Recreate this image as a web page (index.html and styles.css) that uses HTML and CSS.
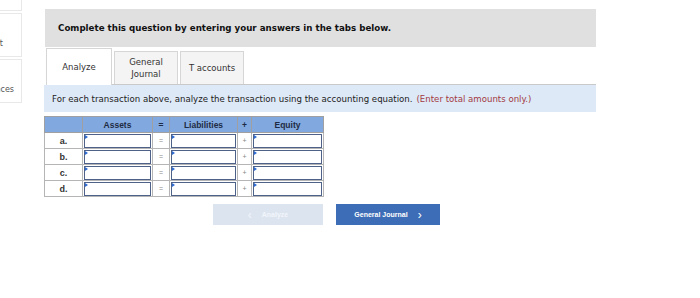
FILE: index.html
```html
<!DOCTYPE html>
<html lang="en">
<head>
  <meta charset="UTF-8">
  <title>Analyze</title>
  <link rel="stylesheet" href="styles.css">
</head>
<body>
  <div class="page">
    <aside class="sidebar">
      <div class="side-box side-top"></div>
      <div class="side-box side-mid"><span>Print</span></div>
      <div class="side-box side-low"><span>References</span></div>
    </aside>

    <main class="main">
      <div class="prompt">Complete this question by entering your answers in the tabs below.</div>

      <div class="tabs">
        <div class="tab active">Analyze</div>
        <div class="tab">General<br>Journal</div>
        <div class="tab">T accounts</div>
      </div>

      <div class="instructions">
        For each transaction above, analyze the transaction using the accounting equation.
        <span class="note">(Enter total amounts only.)</span>
      </div>

      <table class="equation">
        <thead>
          <tr>
            <th class="c-label"></th>
            <th class="c-assets">Assets</th>
            <th class="c-op">=</th>
            <th class="c-liab">Liabilities</th>
            <th class="c-op2">+</th>
            <th class="c-equity">Equity</th>
          </tr>
        </thead>
        <tbody>
          <tr>
            <td class="row-label">a.</td>
            <td><div class="field"></div></td>
            <td class="op">=</td>
            <td><div class="field"></div></td>
            <td class="op">+</td>
            <td><div class="field"></div></td>
          </tr>
          <tr>
            <td class="row-label">b.</td>
            <td><div class="field"></div></td>
            <td class="op">=</td>
            <td><div class="field"></div></td>
            <td class="op">+</td>
            <td><div class="field"></div></td>
          </tr>
          <tr>
            <td class="row-label">c.</td>
            <td><div class="field"></div></td>
            <td class="op">=</td>
            <td><div class="field"></div></td>
            <td class="op">+</td>
            <td><div class="field"></div></td>
          </tr>
          <tr>
            <td class="row-label">d.</td>
            <td><div class="field"></div></td>
            <td class="op">=</td>
            <td><div class="field"></div></td>
            <td class="op">+</td>
            <td><div class="field"></div></td>
          </tr>
        </tbody>
      </table>

      <div class="nav">
        <button class="nav-btn prev" disabled><span class="chev">&lsaquo;</span>Analyze</button>
        <button class="nav-btn next">General Journal<span class="chev after">&rsaquo;</span></button>
      </div>
    </main>
  </div>
</body>
</html>
```

FILE: styles.css
```css
body {
  margin: 0;
  background: #fff;
  font-family: "DejaVu Sans", Verdana, sans-serif;
  color: #222;
}

.page {
  display: flex;
  align-items: flex-start;
}

/* left column, mostly cut off */
.sidebar {
  width: 22px;
  flex-shrink: 0;
  display: flex;
  flex-direction: column;
  gap: 2px;
  overflow: hidden;
}

.side-box {
  border: 1px solid #e8e8e8;
  border-left: none;
  display: flex;
  align-items: center;
  justify-content: flex-end;
  font-size: 8px;
  color: #555;
  white-space: nowrap;
  overflow: hidden;
}

.side-box span {
  margin-right: 7px;
}

.side-top { height: 10px; border-top: none; }
.side-mid { height: 44px; padding-top: 16px; box-sizing: border-box; }
.side-mid span { margin-right: 18px; }
.side-low { height: 44px; padding-top: 16px; box-sizing: border-box; }

.main {
  margin-left: 22px;
  width: 552px;
  padding-top: 9px;
}

.prompt {
  margin-left: 1px;
  height: 38px;
  background: #e0e0e0;
  padding-left: 13px;
  display: flex;
  align-items: center;
  font-size: 8.7px;
  font-weight: bold;
  color: #111;
}

.tabs {
  display: flex;
  align-items: flex-end;
  gap: 2px;
  margin-left: 2px;
  height: 37px;
  border-bottom: 1px solid #c9c9c9;
}

.tab {
  box-sizing: border-box;
  width: 64px;
  height: 33px;
  border: 1px solid #d6d6d6;
  border-bottom: none;
  background: #f4f4f4;
  display: flex;
  align-items: center;
  justify-content: center;
  text-align: center;
  font-size: 8.5px;
  line-height: 12px;
  color: #333;
}

.tab.active {
  width: 66px;
  height: 37px;
  background: #fff;
  margin-bottom: -1px;
}

.instructions {
  height: 27px;
  background: #dde9f7;
  display: flex;
  align-items: center;
  padding-left: 8px;
  font-size: 8.6px;
  color: #222;
  white-space: nowrap;
}

.note {
  color: #a33a3f;
  margin-left: 4px;
}

.equation {
  margin-top: 4px;
  border-collapse: collapse;
  border: 1px solid #a0a0a0;
  font-family: "Liberation Sans", Arial, sans-serif;
  font-size: 8.5px;
  table-layout: fixed;
  width: 280px;
}

.equation th {
  background: #82a9df;
  height: 15px;
  padding: 0;
  border: 1px solid #a0a0a0;
  color: #1e2b44;
  font-weight: bold;
}

.c-label { width: 37px; }
.c-assets { width: 69px; }
.c-op { width: 16px; }
.c-liab { width: 67px; }
.c-op2 { width: 13px; }
.c-equity { width: 71px; }

.equation td {
  height: 15px;
  padding: 0;
  border: 1px solid #b5b5b5;
  text-align: center;
}

.row-label {
  font-weight: bold;
  font-size: 9px;
  color: #333;
}

.op {
  color: #888;
  font-size: 7px;
}

.field {
  position: relative;
  height: 12px;
  margin: 0 1px;
  border: 1px solid #4d6189;
  background: #fff;
}

/* small blue marker in the field corner */
.field::before {
  content: "";
  position: absolute;
  left: 0;
  top: 0;
  border-left: 3px solid #2d6ad1;
  border-top: 2px solid transparent;
  border-bottom: 2px solid transparent;
}

.nav {
  display: flex;
  gap: 13px;
  margin-top: 7px;
  margin-left: 169px;
}

.nav-btn {
  height: 21px;
  border: none;
  display: flex;
  align-items: center;
  justify-content: center;
  font-family: "Liberation Sans", Arial, sans-serif;
  font-size: 7px;
  font-weight: bold;
  color: #fff;
}

.chev {
  font-size: 12px;
  font-weight: normal;
  margin-right: 10px;
  line-height: 1;
}

.chev.after {
  margin-right: 0;
  margin-left: 10px;
}

.prev {
  width: 110px;
  background: #dce4f0;
  color: #f2f5fa;
}

.next {
  width: 104px;
  background: #3d6db6;
}
```
